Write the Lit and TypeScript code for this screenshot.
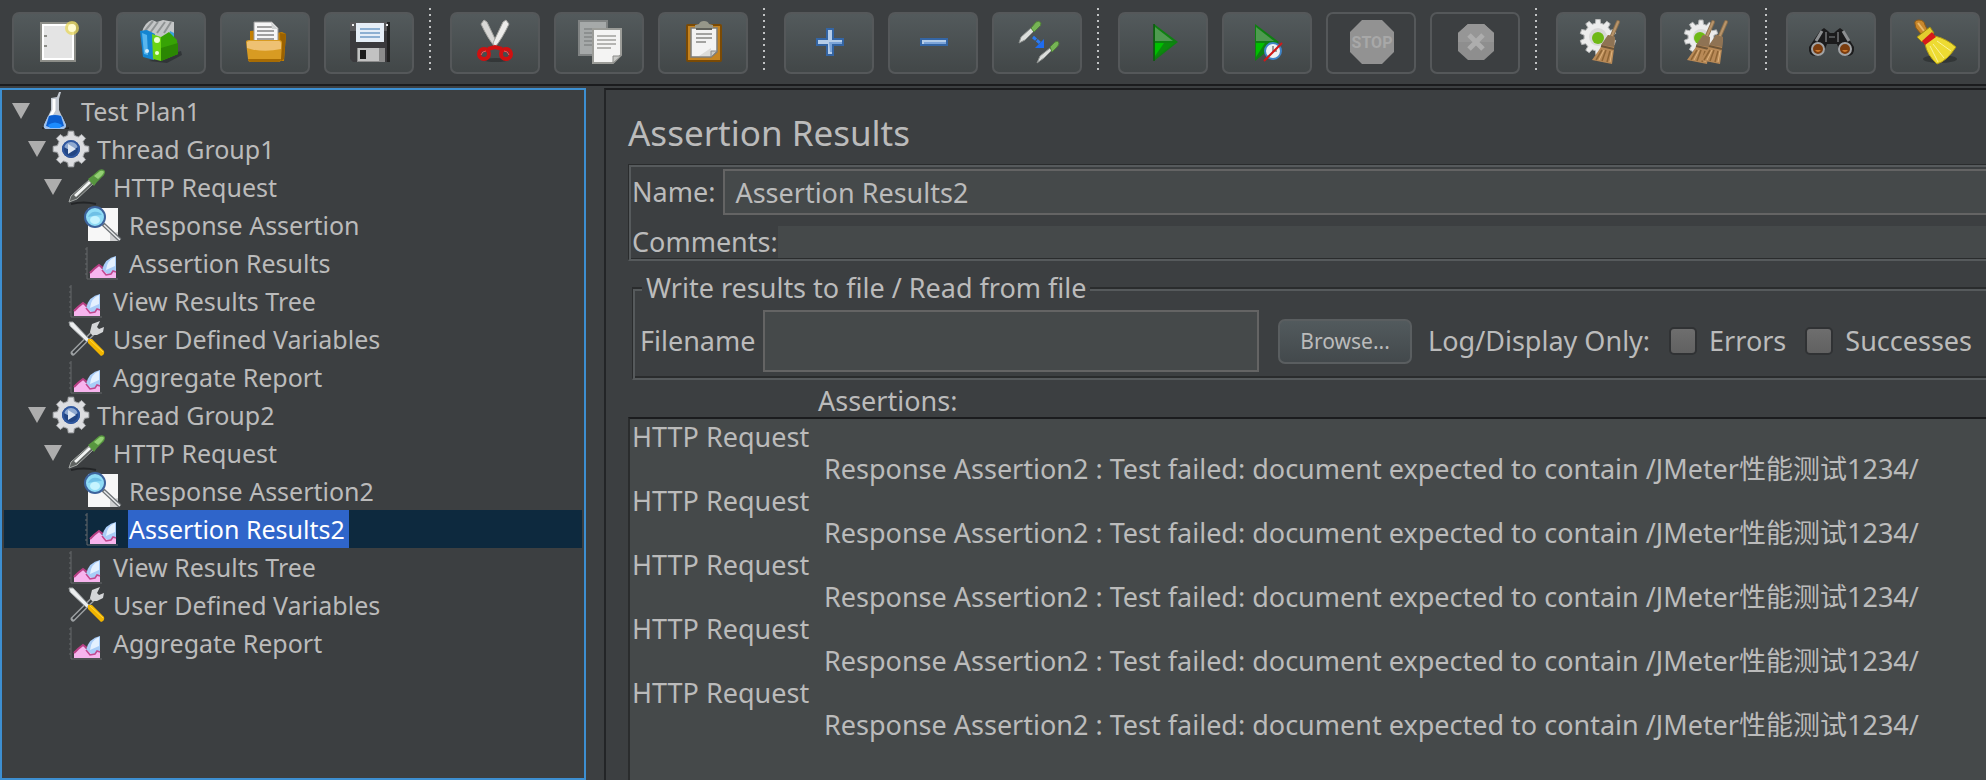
import { LitElement, html, css, svg, nothing, SVGTemplateResult } from "lit";
import { customElement, property } from "lit/decorators.js";

const gearPath = (cx: number, cy: number, r: number, teeth: number, depth: number): string => {
  const pts: string[] = [];
  const step = (Math.PI * 2) / teeth;
  for (let i = 0; i < teeth; i++) {
    const a = i * step - Math.PI / 2;
    const corners: [number, number][] = [[-0.3, r - depth], [-0.19, r], [0.19, r], [0.3, r - depth]];
    for (const [off, rad] of corners) {
      const t = a + off * step;
      pts.push(`${(cx + Math.cos(t) * rad).toFixed(2)},${(cy + Math.sin(t) * rad).toFixed(2)}`);
    }
  }
  return `M${pts.join("L")}Z`;
};

const lines = (x1: number, x2: number, ys: number[], color: string) =>
  ys.map((y) => svg`<path d="M${x1} ${y}H${x2}" stroke=${color} stroke-width="2"/>`);

const broom = (dx: number) => svg`
  <g transform="translate(${dx} 0)">
    <path d="M41 3L34 19" stroke="#8a6f4c" stroke-width="4" stroke-linecap="round"/>
    <path d="M41 3L34 19" stroke="#b8946a" stroke-width="2" stroke-linecap="round"/>
    <path d="M31 16L38 18L37 30L35 45L15 41L22 31Z" fill="#b98a57"/>
    <path d="M31 16L38 18L37 28L24 26Z" fill="#8f7354"/>
    <path d="M24 27L37 30" stroke="#6f5638" stroke-width="2"/>
    <path d="M25 31L19 41M29 31L25 42M33 32L30 43" stroke="#8f6535" stroke-width="1.5"/>
    <path d="M27 31L22 41M35 32L33 43" stroke="#e0b47c" stroke-width="1"/>
  </g>`;

const toolIcons: Record<string, SVGTemplateResult> = {
  fresh: svg`
    <rect x="8" y="4" width="34" height="38" fill="#fff" stroke="#8c8d88" stroke-width="2"/>
    <rect x="11" y="7" width="28" height="32" fill="#e4e4e4"/>
    <path d="M11 17h3M11 27h3" stroke="#8c8d88" stroke-width="2"/>
    <circle cx="39" cy="9" r="7" fill="#e8d75a" opacity=".75"/>
    <circle cx="39" cy="9" r="4" fill="#fffbd0"/>`,
  templates: svg`
    <path d="M12 42L30 44L45 36L44 32Z" fill="#23272a" opacity=".6"/>
    <path d="M5 13Q8 3 15 1L20 3L26 1L37 3V18L20 20Z" fill="#c4c6c7"/>
    <path d="M7 13L16 2M13 14L21 3M20 14L28 3M27 14L34 3" stroke="#8f9394" stroke-width="2"/>
    <path d="M33 12L37 14V18H32Z" fill="#3aa0dc"/>
    <path d="M3 12L10 11L18 15L17 41L6 38Z" fill="#1485d1"/>
    <path d="M5 14L10 16L11 36L7 35Z" fill="#58b6ee"/>
    <path d="M15 15L24 18V42L16 40Z" fill="#6ad414"/>
    <path d="M24 18L32 13L40 21L41 35L24 42Z" fill="#37a305"/>
    <path d="M24 29L41 24V35L24 42Z" fill="#2b8703"/>
    <circle cx="20" cy="21" r="3" fill="#eaffd0"/><circle cx="20" cy="34" r="2" fill="#eaffd0"/><circle cx="10" cy="32" r="2" fill="#d4ecfb"/>`,
  open: svg`
    <path d="M9 12L21 11L24 16L41 13L45 15L43 42H9Z" fill="#c47f00"/>
    <path d="M39 14L45 15L43 40L40 42Z" fill="#9c6200"/>
    <path d="M13 3H31L37 9V24H13Z" fill="#f6f6f6" stroke="#999" stroke-width="1"/>
    ${lines(16, 33, [8, 12, 16, 20], "#a0a0a0")}
    <path d="M30 3L37 10H31Z" fill="#cfd2d2"/>
    <path d="M5 23Q5 21 8 21H38Q41 21 41 24L40 40Q40 43 37 43H10Q7 43 7 40Z" fill="#d89b22"/>
    <path d="M6 23Q7 22 9 22H38Q40 22 40 25V30Q22 34 6 29Z" fill="#eec173"/>
    <path d="M7 40Q7 43 10 43H37Q40 43 40 40Z" fill="#a86c04"/>`,
  save: svg`
    <path d="M5 3H45V43H8L5 40Z" fill="#3b3a3d"/>
    <path d="M5 3H45V12H5Z" fill="#5a595c"/>
    <path d="M45 3V43H42V3Z" fill="#222"/>
    <rect x="11" y="4" width="28" height="19" fill="#e6eef7"/>
    ${lines(15, 35, [10, 14, 18], "#8db0d2")}
    <rect x="12" y="29" width="28" height="14" fill="#8c8c8c"/>
    <rect x="13" y="29" width="21" height="13" fill="#c2c2c2"/>
    <rect x="15" y="31" width="6" height="9" fill="#1c1c1c"/>
    <rect x="7" y="5" width="2" height="2" fill="#eee"/><rect x="41" y="5" width="2" height="2" fill="#eee"/>`,
  cut: svg`
    <ellipse cx="25" cy="41" rx="12" ry="2" fill="#2c2f30" opacity=".7"/>
    <path d="M10 5L13 1L16 3L26 24L24 28Q17 20 10 5Z" fill="#d8d8d6" stroke="#a4a4a0" stroke-width="1"/>
    <path d="M38 5L35 1L32 3L22 24L24 28Q31 20 38 5Z" fill="#ececea" stroke="#a4a4a0" stroke-width="1"/>
    <g fill="none" stroke="#d01010" stroke-width="4">
      <ellipse cx="13" cy="35" rx="5" ry="5"/><ellipse cx="35" cy="35" rx="5" ry="5"/>
      <path d="M17 30L24 28L31 30"/>
    </g>
    <path d="M10 36Q11 32 15 32M33 32Q37 32 38 36" stroke="#ff5050" stroke-width="1" fill="none"/>`,
  copy: svg`
    <rect x="4" y="2" width="28" height="34" fill="#a6a9a9" stroke="#808383" stroke-width="2"/>
    ${lines(9, 28, [10, 14, 18, 22, 26], "#8c8f8f")}
    <path d="M18 10H46V36L38 44H18Z" fill="#f4f4f3" stroke="#9b9c98" stroke-width="2"/>
    ${lines(22, 41, [17, 21, 25], "#b5b5b2")}${lines(22, 36, [29], "#b5b5b2")}
    <path d="M38 44V37H46Z" fill="#c8c9c6" stroke="#8c8d8a" stroke-width="1"/>`,
  paste: svg`
    <rect x="8" y="6" width="34" height="36" rx="1" fill="#c58421" stroke="#7a4a05" stroke-width="2"/>
    <path d="M12 9H38V33L32 38H12Z" fill="#f3f3f2" stroke="#7d7e7a" stroke-width="1.5"/>
    ${lines(17, 33, [15, 19], "#a3a3a0")}${lines(17, 27, [23], "#a3a3a0")}
    <path d="M20 37L32 29V37Z" fill="#dcdcd8"/>
    <path d="M32 38V32H38Z" fill="#c9c9c5" stroke="#888" stroke-width="1"/>
    <path d="M16 10V6L20 5Q21 2 25 2Q29 2 30 5L34 6V10Z" fill="#96978a"/><path d="M17 10H33" stroke="#5f605a" stroke-width="2"/>`,
  plus: svg`
    <path d="M21 9H29V19H39V27H29V37H21V27H11V19H21Z" fill="#3465a4"/>
    <path d="M23 11H27V21H37V25H27V35H23V25H13V21H23Z" fill="#b4cce8"/>
    <path d="M24 23H37V25H27V33H25Z" fill="#7ba4d9"/>`,
  minus: svg`
    <rect x="11" y="19" width="28" height="8" fill="#3465a4"/>
    <rect x="13" y="21" width="24" height="4" fill="#b4cce8"/>
    <rect x="15" y="23" width="22" height="2" fill="#7ba4d9"/>`,
  toggle: svg`
    <path d="M6 24L8 18L18 9L21 12L12 21Z" fill="#dcdedc" stroke="#8c908e" stroke-width="1"/>
    <path d="M18 9L23 3Q26 1 28 4Q28 7 26 8L21 13Z" fill="#76b455" stroke="#4f7f38" stroke-width="1"/>
    <path d="M24 44L27 37L37 29L39 31L31 39Z" fill="#dcdedc" stroke="#8c908e" stroke-width="1"/>
    <path d="M37 28L42 23Q45 21 46 24Q46 26 44 28L39 33Z" fill="#76b455" stroke="#4f7f38" stroke-width="1"/>
    <path d="M20 18L27 24" stroke="#2a7af0" stroke-width="3" stroke-dasharray="4 1"/>
    <path d="M31 20V29H22Z" fill="#1e6cf0"/>`,
  start: svg`
    <path d="M15 5L39 23L15 42Z" fill="#0f7f12"/>
    <path d="M16 8L34 22H16Z" fill="#4f9a50"/><path d="M16 24H36L16 39Z" fill="#0b8b0c"/>
    <path d="M16 24H25L16 37Z" fill="#00c000"/><path d="M15 5V42" stroke="#0a5a0c" stroke-width="1.5"/>`,
  startNoPause: svg`
    <path d="M12 5L36 23L12 42Z" fill="#0f7f12"/>
    <path d="M13 8L31 22H13Z" fill="#4f9a50"/><path d="M13 24H22L13 38Z" fill="#00c000"/>
    <circle cx="30" cy="32" r="8" fill="#eef1f4" stroke="#3f83c6" stroke-width="2"/>
    <path d="M30 27V32H34" stroke="#9a9a9a" stroke-width="2" fill="none"/>
    <path d="M21 42L39 24" stroke="#d01818" stroke-width="2"/>`,
  stop: svg`
    <path d="M15 1H35L47 13V33L35 45H15L3 33V13Z" fill="#929292"/>
    <text x="25" y="29" text-anchor="middle" font-family="Roboto, sans-serif" font-size="16" font-weight="700" fill="#a8a8a8">STOP</text>`,
  shutdown: svg`
    <path d="M17 5H33L43 14V32L33 41H17L7 32V14Z" fill="#8e8e8e"/>
    <path d="M17 5H33L43 14V23H7V14Z" fill="#969696"/>
    <path d="M18 16L32 30M32 16L18 30" stroke="#adadad" stroke-width="5"/>`,
  clear: svg`
    <path d=${gearPath(21, 18, 18, 10, 4)} fill="#ececec" stroke="#b4b6b6" stroke-width="1"/>
    <circle cx="21" cy="18" r="9" fill="#d8d8d8"/><circle cx="21" cy="19" r="6" fill="#6fb916"/>
    ${broom(0)}`,
  clearAll: svg`
    <path d=${gearPath(20, 18, 17, 10, 4)} fill="#ececec" stroke="#b4b6b6" stroke-width="1"/>
    <circle cx="20" cy="18" r="8" fill="#d8d8d8"/><circle cx="19" cy="19" r="6" fill="#6fb916"/>
    ${broom(-9)}${broom(4)}`,
  search: svg`
    <path d="M13 12L17 9L21 12L23 14H27L29 12L33 9L37 12L47 28Q48 37 40 37Q33 37 32 30L30 25H20L18 30Q17 37 9 37Q1 37 2 28Z" fill="#1b1b1c"/>
    <path d="M15 12L9 22M36 12L42 22" stroke="#8d8f91" stroke-width="3"/>
    <path d="M19 13L19 23M31 13V23" stroke="#5b5c5e" stroke-width="2"/>
    <path d="M22 18H28" stroke="#4e5052" stroke-width="2"/>
    <circle cx="11" cy="30" r="6" fill="#7a3c0e" stroke="#a1a3a5" stroke-width="2"/>
    <circle cx="38" cy="30" r="6" fill="#7a3c0e" stroke="#a1a3a5" stroke-width="2"/>
    <path d="M8 31Q11 35 14 31ZM35 31Q38 35 41 31Z" fill="#d07a2c"/>`,
  sweep: svg`
    <ellipse cx="29" cy="40" rx="17" ry="4" fill="#26292a" opacity=".6"/>
    <path d="M4 5Q3 1 8 1Q13 1 14 6L17 12L10 15L5 9Z" fill="#c9872c" stroke="#8d5a16" stroke-width="1"/>
    <path d="M7 4L13 12" stroke="#e9b868" stroke-width="2"/>
    <path d="M6 18L19 8L23 14L11 23Z" fill="#e3cc2e" stroke="#a08a10" stroke-width="1"/>
    <path d="M14 25L24 17Q36 20 45 28Q36 42 26 45Q16 36 14 25Z" fill="#eddb32" stroke="#b09a14" stroke-width="1"/>
    <path d="M11 22L21 13L25 18L14 26Z" fill="#d61a1a"/>
    <path d="M19 27L27 43M22 25L33 39M26 22L40 32" stroke="#fbf29a" stroke-width="1"/>`,
};

const treeIcons: Record<string, SVGTemplateResult> = {
  plan: svg`
    <path d="M6 35Q19 40 33 35V37H6Z" fill="#1c1e20" opacity=".7"/>
    <path d="M15 6L21 5L23 0H25L23 7V18L30 33Q30 37 26 37H11Q7 37 8 33L15 18Z" fill="#c3c9d2"/>
    <path d="M18 7V18L13 27" stroke="#fff" stroke-width="3" fill="none"/>
    <path d="M12 24Q19 21 26 24L30 33Q30 37 26 37H11Q7 37 8 33Z" fill="#9fc2ee"/>
    <path d="M13 24Q19 22 25 24L28 34Q19 38 10 34Z" fill="#0c5fd0"/>
    <path d="M12 33Q19 28 26 33L24 36H14Z" fill="#1c8cff"/>`,
  group: svg`
    <path d=${gearPath(19, 19, 18, 8, 4)} fill="#dcdde0" stroke="#a9abae" stroke-width="1"/>
    <circle cx="19" cy="19" r="9" fill="#234684"/>
    <path d="M12 17A7 7 0 0 1 26 17Q19 22 12 17Z" fill="#8fa9d0"/>
    <circle cx="19" cy="19" r="8" fill="none" stroke="#3058a0" stroke-width="2"/>
    <path d="M16 14L24 19L16 24Z" fill="#dde6f2"/>`,
  sampler: svg`
    <path d="M3 36Q16 33 28 36" stroke="#232527" stroke-width="2" fill="none"/>
    <path d="M1 34L3 28L21 12L25 16L9 31Z" fill="#5f6361" stroke="#a4a8a6" stroke-width="1"/>
    <path d="M7 28L22 14" stroke="#f2f4f3" stroke-width="3"/>
    <path d="M20 11L24 8L31 2Q35 0 37 3Q37 7 34 9L29 14L26 18Z" fill="#57963f"/>
    <path d="M26 8L32 3Q35 2 36 4Q35 7 30 11Z" fill="#93cf74"/>`,
  assertion: svg`
    <path d="M4 2H34V28L26 35H4Z" fill="#f7f7f7"/><path d="M26 35V28L34 26V35Z" fill="#cfd0d1"/>
    <path d="M19 18L36 34" stroke="#6e7276" stroke-width="4"/><path d="M20 19L36 34" stroke="#e9ebec" stroke-width="1.5"/>
    <circle cx="11" cy="11" r="10" fill="#8fdcf6" stroke="#3d639c" stroke-width="2"/>
    <path d="M4 11A8 8 0 0 1 18 9Q11 9 4 11Z" fill="#6fc0e6"/><ellipse cx="11" cy="14" rx="5" ry="4" fill="#c6f4ff"/>`,
  listener: svg`
    <path d="M3 3V35H34" stroke="#65686a" stroke-width="1" fill="none"/>
    <path d="M1 5H3M1 10H3M1 15H3M1 20H3M1 25H3M1 30H3" stroke="#65686a" stroke-width="1"/>
    <path d="M6 34V28L10 25L15 21L18 25L25 29L32 27V34Z" fill="#f7b4ee"/>
    <path d="M6 29L10 25L15 21L19 24" stroke="#b83e84" stroke-width="2" fill="none"/>
    <path d="M32 12V27L25 31L18 26Q21 14 32 12Z" fill="#a9cdf8"/>
    <path d="M31 13V22L22 26Q23 16 31 13Z" fill="#e4f1ff"/>
    <path d="M18 26L22 31L27 30L29 27L32 28" stroke="#c2488f" stroke-width="1.5" fill="none"/>`,
  variables: svg`
    <path d="M5 33L27 11" stroke="#9da1a3" stroke-width="5" stroke-linecap="round"/>
    <path d="M5 33L26 12" stroke="#33373a" stroke-width="2"/>
    <path d="M22 12L24 4L32 1L29 7L31 9L36 7L35 12L29 15L24 15Z" fill="#d4d6d8"/>
    <path d="M1 2L5 2L21 19L19 22L2 6Z" fill="#eceeef" stroke="#9da1a3" stroke-width="1"/>
    <path d="M20 19L24 19L36 31Q37 35 33 36L20 23Z" fill="#f0b400"/>
    <path d="M22 20L35 32" stroke="#ffd83a" stroke-width="1"/>`,
};

interface Tool { icon: string; label: string; disabled?: boolean }
const toolGroups: Tool[][] = [
  [{ icon: "fresh", label: "New" }, { icon: "templates", label: "Templates" }, { icon: "open", label: "Open" }, { icon: "save", label: "Save" }],
  [{ icon: "cut", label: "Cut" }, { icon: "copy", label: "Copy" }, { icon: "paste", label: "Paste" }],
  [{ icon: "plus", label: "Expand All" }, { icon: "minus", label: "Collapse All" }, { icon: "toggle", label: "Toggle" }],
  [
    { icon: "start", label: "Start" },
    { icon: "startNoPause", label: "Start no pauses" },
    { icon: "stop", label: "Stop", disabled: true },
    { icon: "shutdown", label: "Shutdown", disabled: true },
  ],
  [{ icon: "clear", label: "Clear" }, { icon: "clearAll", label: "Clear All" }],
  [{ icon: "search", label: "Search" }, { icon: "sweep", label: "Reset Search" }],
];

interface TreeNode { icon: string; label: string; depth: number; open?: boolean; selected?: boolean }
const nodes: TreeNode[] = [
  { icon: "plan", label: "Test Plan1", depth: 0, open: true },
  { icon: "group", label: "Thread Group1", depth: 1, open: true },
  { icon: "sampler", label: "HTTP Request", depth: 2, open: true },
  { icon: "assertion", label: "Response Assertion", depth: 3 },
  { icon: "listener", label: "Assertion Results", depth: 3 },
  { icon: "listener", label: "View Results Tree", depth: 2 },
  { icon: "variables", label: "User Defined Variables", depth: 2 },
  { icon: "listener", label: "Aggregate Report", depth: 2 },
  { icon: "group", label: "Thread Group2", depth: 1, open: true },
  { icon: "sampler", label: "HTTP Request", depth: 2, open: true },
  { icon: "assertion", label: "Response Assertion2", depth: 3 },
  { icon: "listener", label: "Assertion Results2", depth: 3, selected: true },
  { icon: "listener", label: "View Results Tree", depth: 2 },
  { icon: "variables", label: "User Defined Variables", depth: 2 },
  { icon: "listener", label: "Aggregate Report", depth: 2 },
];

const results = Array.from({ length: 5 }, () => ({
  sampler: "HTTP Request",
  message: "Response Assertion2 : Test failed: document expected to contain /JMeter性能测试1234/",
}));

@customElement("tool-bar")
export class ToolBar extends LitElement {
  static styles = css`
    :host { display: block; }
    .bar {
      display: flex;
      gap: 14px;
      padding: 12px 12px 10px;
      overflow: hidden;
      border-bottom: 2px solid #1b1c1e;
    }
    .tool {
      flex: none;
      display: flex;
      align-items: center;
      justify-content: center;
      box-sizing: border-box;
      width: 90px;
      height: 62px;
      padding: 0;
      border: 2px solid #55585a;
      border-radius: 7px;
      background: linear-gradient(#535a5c, #424748);
    }
    .tool:disabled { background: #3c3f41; }
    .glyph { display: block; width: 48px; height: 48px; }
    .divider {
      flex: none;
      width: 2px;
      height: 62px;
      margin: -4px 5px 0 1px;
      background: repeating-linear-gradient(#c0c2c3 0 2px, transparent 2px 6px);
    }
  `;

  render() {
    return html`<div class="bar" role="toolbar" aria-label="Main">
      ${toolGroups.map(
        (group, i) => html`
          ${i ? html`<span class="divider" role="separator"></span>` : nothing}
          ${group.map(
            (t) => html`<button class="tool" type="button" aria-label=${t.label} ?disabled=${t.disabled}>
              <svg class="glyph" viewBox="0 0 48 48" aria-hidden="true">${toolIcons[t.icon]}</svg>
            </button>`
          )}
        `
      )}
    </div>`;
  }
}

@customElement("plan-tree")
export class PlanTree extends LitElement {
  @property({ attribute: false }) items: TreeNode[] = [];

  static styles = css`
    :host { display: block; border: 2px solid #3d8fd1; padding: 2px; min-width: 0; overflow: hidden; }
    .list { list-style: none; margin: 0; padding: 0; }
    .row { display: flex; align-items: center; gap: 6px; height: 38px; padding-left: 8px; }
    .indent { flex: none; margin-right: -6px; }
    .arrow { flex: none; width: 18px; height: 16px; fill: #adadad; }
    .icon { flex: none; width: 38px; height: 38px; }
    .label { padding: 0 4px 0 1px; line-height: 38px; font-size: 25px; white-space: nowrap; }
    .selected { background: #0d293e; }
    .selected .label { background: #2f65ca; color: #fff; }
  `;

  render() {
    return html`<ul class="list" role="tree" aria-label="Test plan">
      ${this.items.map(
        (n) => html`<li
          class="row ${n.selected ? "selected" : ""}"
          role="treeitem"
          aria-level=${n.depth + 1}
          aria-selected=${n.selected ? "true" : "false"}
        >
          <span class="indent" style="width:${n.depth * 16}px"></span>
          <svg class="arrow" viewBox="0 0 18 16" aria-hidden="true">${n.open ? svg`<path d="M0 0H18L9 16Z"/>` : nothing}</svg>
          <svg class="icon" viewBox="0 0 38 38" aria-hidden="true">${treeIcons[n.icon]}</svg>
          <span class="label">${n.label}</span>
        </li>`
      )}
    </ul>`;
  }
}

@customElement("results-panel")
export class ResultsPanel extends LitElement {
  static styles = css`
    :host {
      display: flex;
      flex-direction: column;
      min-width: 0;
      padding: 21px 0 0 22px;
      border-top: 2px solid #1b1c1e;
      border-left: 2px solid #232527;
      font-size: 27px;
      line-height: 32px;
    }
    input, button { font: inherit; color: inherit; margin: 0; box-sizing: border-box; }
    .title { margin: 0 0 9px; font-size: 35px; line-height: 44px; font-weight: 400; }
    .props {
      border: solid #2a2c2d;
      border-width: 1px 0 0 1px;
      border-bottom: 2px solid #565a5c;
      box-shadow: inset 2px 2px #565a5c, inset 0 -1px #2a2c2d;
      padding: 4px 0 1px 3px;
    }
    .field { display: flex; align-items: center; }
    .name-input {
      flex: 1;
      min-width: 0;
      height: 46px;
      margin-left: 8px;
      padding: 0 10px;
      border: 2px solid #646464;
      border-right: 0;
      background: #45494a;
    }
    .comments { margin-top: 11px; }
    .comments-input { flex: 1; min-width: 0; height: 32px; padding: 0; border: 0; background: #45494a; }
    .file {
      min-width: 0;
      margin: 11px 0 0 4px;
      padding: 6px 14px 6px 7px;
      border: solid #2a2c2d;
      border-width: 2px 0 0 1px;
      border-bottom: 2px solid #565a5c;
      box-shadow: inset 2px 2px #565a5c, inset 0 -2px #2a2c2d;
    }
    .legend { margin-left: 2px; padding: 0 4px; background: #3c3f41; }
    .file-row { display: flex; align-items: center; }
    .file-input {
      flex: 1;
      min-width: 0;
      height: 62px;
      margin: 0 19px 0 8px;
      border: 2px solid #646464;
      background: #45494a;
    }
    .browse {
      flex: none;
      width: 134px;
      height: 45px;
      margin-right: 16px;
      padding: 0;
      border: 2px solid #5a5e60;
      border-radius: 7px;
      background: linear-gradient(#525a5d, #43494c);
      font-size: 21px;
    }
    .check { display: flex; align-items: center; flex: none; margin-left: 19px; gap: 12px; }
    .box {
      appearance: none;
      width: 28px;
      height: 28px;
      border: 2px solid #303234;
      border-radius: 5px;
      background: linear-gradient(#6e6e6e, #616161);
    }
    .list-title { margin: 5px 0 0 190px; font-size: 27px; line-height: 32px; font-weight: 400; }
    .output {
      flex: 1;
      margin: 0;
      padding: 2px 0 0 2px;
      border-top: 2px solid #1b1c1e;
      border-left: 2px solid #2a2c2d;
      background: #45494a;
    }
    .output dd { margin: 0 0 0 192px; white-space: nowrap; }
  `;

  render() {
    return html`
      <h1 class="title">Assertion Results</h1>
      <div class="props">
        <div class="field">
          <label for="name">Name:</label>
          <input id="name" class="name-input" type="text" .value=${"Assertion Results2"} />
        </div>
        <div class="field comments">
          <label for="comments">Comments:</label>
          <input id="comments" class="comments-input" type="text" />
        </div>
      </div>
      <fieldset class="file">
        <legend class="legend">Write results to file / Read from file</legend>
        <div class="file-row">
          <label for="filename">Filename</label>
          <input id="filename" class="file-input" type="text" />
          <button class="browse" type="button">Browse...</button>
          <span>Log/Display Only:</span>
          <label class="check"><input class="box" type="checkbox" />Errors</label>
          <label class="check"><input class="box" type="checkbox" />Successes</label>
        </div>
      </fieldset>
      <h2 class="list-title">Assertions:</h2>
      <dl class="output">
        ${results.map((r) => html`<dt>${r.sampler}</dt><dd>${r.message}</dd>`)}
      </dl>
    `;
  }
}

@customElement("app-root")
export class AppRoot extends LitElement {
  static styles = css`
    :host {
      display: flex;
      flex-direction: column;
      box-sizing: border-box;
      min-height: 100vh;
      overflow: hidden;
      background: #3c3f41;
      color: #bbbbbb;
      font-family: "Noto Sans", "Noto Sans CJK SC", sans-serif;
    }
    .split {
      flex: 1;
      display: grid;
      grid-template-columns: minmax(0, 293fr) minmax(0, 691fr);
      column-gap: 18px;
      padding-top: 2px;
    }
  `;

  render() {
    return html`
      <tool-bar></tool-bar>
      <div class="split">
        <plan-tree .items=${nodes}></plan-tree>
        <results-panel></results-panel>
      </div>
    `;
  }
}
